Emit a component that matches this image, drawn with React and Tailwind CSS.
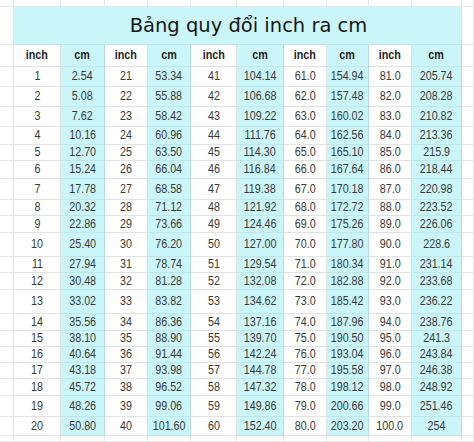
import React from 'react'

// column widths of the sheet, left gutter and right spare column included
const COLS = ['w-[14px]', 'w-[47px]', 'w-[44px]', 'w-[43px]', 'w-[43px]', 'w-[46px]', 'w-[47px]', 'w-[43px]', 'w-[42px]', 'w-[43px]', 'w-[50px]', 'w-[12px]']

// heights of the 20 data rows
const ROW_H = ['h-[20px]', 'h-[20px]', 'h-[20px]', 'h-[18px]', 'h-[16px]', 'h-[18px]', 'h-[21px]', 'h-[16px]', 'h-[17px]', 'h-[24px]', 'h-[16px]', 'h-[17px]', 'h-[24px]', 'h-[17px]', 'h-[16px]', 'h-[16px]', 'h-[16px]', 'h-[17px]', 'h-[21px]', 'h-[19px]']

const cm = (n) => ((n * 254) / 100).toFixed(2)

function rowValues(i) {
    return [
        String(i), cm(i),
        String(i + 20), cm(i + 20),
        String(i + 40), cm(i + 40),
        (i + 60).toFixed(1), cm(i + 60),
        (i + 80).toFixed(1), String(parseFloat(cm(i + 80))),
    ]
}

function Cell({ col, cyan, bold, children }) {
    return (
        <div
            className={`${COLS[col]} shrink-0 h-full flex items-center justify-center border-b border-r ${
                cyan ? 'bg-[#cbf6f9] border-b-[#bfe6ea] border-r-[#b3dde2]' : 'bg-white border-[#e2e2e2]'
            } ${bold ? 'font-bold text-[#1e1e1e]' : 'text-[#3a3a3a]'}`}
        >
            <span className="inline-block scale-x-[0.86] whitespace-nowrap">{children}</span>
        </div>
    )
}

function Gutter({ col }) {
    return <div className={`${COLS[col]} shrink-0 h-full bg-white border-b border-r border-[#e8e8e8]`} />
}

export default function App() {
    const rows = Array.from({ length: 20 }, (_, k) => k + 1)
    return (
        <div className="w-[474px] h-[442px] overflow-hidden bg-white text-[12.5px] leading-none" style={{ fontFamily: '"Liberation Sans", Arial, sans-serif' }}>
            <div className="flex h-[7px]">
                {COLS.map((_, c) => <Gutter key={c} col={c} />)}
            </div>

            <div className="flex h-[38px]">
                <Gutter col={0} />
                <div className="w-[448px] shrink-0 h-full flex items-center justify-center bg-[#cbf6f9] border-b border-r border-[#bfe6ea]">
                    <span className="text-[19.5px] text-[#161616] pl-[22px]" style={{ fontFamily: '"DejaVu Sans", Verdana, sans-serif' }}>
                        Bảng quy đổi inch ra cm
                    </span>
                </div>
                <Gutter col={11} />
            </div>

            <div className="flex h-[22px]">
                <Gutter col={0} />
                {['inch', 'cm', 'inch', 'cm', 'inch', 'cm', 'inch', 'cm', 'inch', 'cm'].map((t, k) => (
                    <Cell key={k} col={k + 1} cyan={k % 2 === 1} bold>{t}</Cell>
                ))}
                <Gutter col={11} />
            </div>

            {rows.map((i) => (
                <div key={i} className={`flex ${ROW_H[i - 1]}`}>
                    <Gutter col={0} />
                    {rowValues(i).map((v, k) => (
                        <Cell key={k} col={k + 1} cyan={k % 2 === 1}>{v}</Cell>
                    ))}
                    <Gutter col={11} />
                </div>
            ))}

            <div className="flex h-[6px]">
                {COLS.map((_, c) => <Gutter key={c} col={c} />)}
            </div>
        </div>
    )
}
